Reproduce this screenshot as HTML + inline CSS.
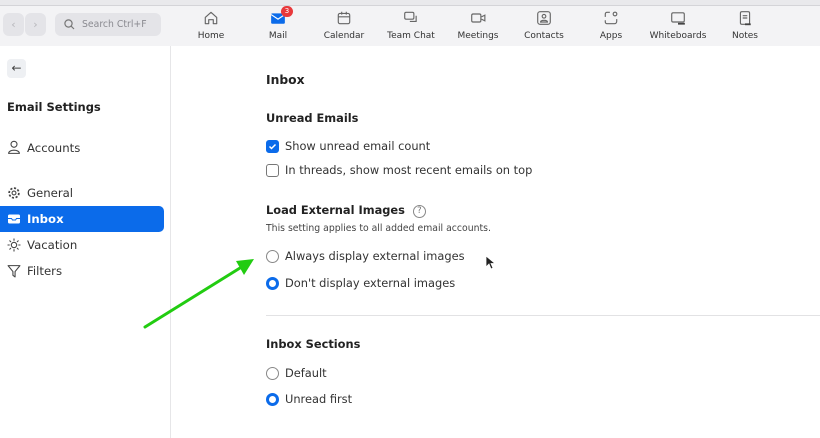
<!DOCTYPE html>
<html><head><style>
*{margin:0;padding:0;box-sizing:border-box}
body{width:820px;height:438px;overflow:hidden;background:#fff;font-family:"DejaVu Sans","Liberation Sans",sans-serif;color:#222;position:relative}
.top{position:absolute;left:0;top:0;width:820px;height:46px;background:#f3f3f5;border-top:5px solid #e9e9ec}
.top:before{content:"";position:absolute;left:0;right:0;top:0;height:1px;background:#d4d4d8}
.nb{position:absolute;top:13px;width:21px;height:23px;background:#e4e4e8;border-radius:6px;color:#b6b6bb;font-size:11px;text-align:center;line-height:23px}
.search{position:absolute;left:55px;top:13px;width:106px;height:23px;background:#e4e4e8;border-radius:6px;font-size:9.3px;color:#8a8a90;line-height:23px;padding-left:27px}
.nav{position:absolute;top:8px;width:70px;text-align:center;font-size:9px;color:#333}
.nav svg{display:block;margin:2px auto 5px;}
.badge{position:absolute;left:38px;top:-2px;width:12px;height:11px;border-radius:6px;background:#e8393c;color:#fff;font-size:7px;line-height:11px;text-align:center}
.side{position:absolute;left:170px;top:46px;width:1px;height:392px;background:#e6e6e8}
.s{position:absolute;left:7px;font-size:11.7px;color:#333;display:flex;align-items:center;gap:6px}
.abs{position:absolute}
.t{position:absolute;left:266px;font-size:11.4px;color:#333;display:flex;align-items:center}
.h{position:absolute;left:266px;font-size:11.4px;font-weight:bold;color:#222}
.cb{width:13px;height:13px;border:1.3px solid #777;border-radius:3px;margin-right:6px;display:inline-block}
.rd{width:13px;height:13px;border:1.2px solid #888;border-radius:50%;margin-right:6px;display:inline-block}
.rd.on{border:3.5px solid #0b6bea}
</style></head><body>
<div class="top">
 <div class="nb" style="left:3px;top:8px">&#8249;</div>
 <div class="nb" style="left:25px;top:8px">&#8250;</div>
 <div class="search" style="top:8px"><svg class="abs" style="left:9px;top:6px" width="11" height="11" viewBox="0 0 11 11"><circle cx="4.5" cy="4.5" r="3.6" fill="none" stroke="#777" stroke-width="1.2"/><path d="M7.2 7.2L10 10" stroke="#777" stroke-width="1.2"/></svg>Search Ctrl+F</div>
</div>
<div class="nav" style="left:176px"><svg width="16" height="16" viewBox="0 0 14 14"><path d="M2 6.5L7 2l5 4.5V12H9V8.5H5V12H2z" fill="none" stroke="#666" stroke-width="1" stroke-linejoin="round"/></svg>Home</div>
<div class="nav" style="left:243px"><svg width="16" height="16" viewBox="0 0 14 14"><rect x="1" y="3" width="12" height="9" rx="1" fill="#0b6bea"/><path d="M1 4l6 4 6-4" fill="none" stroke="#fff" stroke-width="1"/></svg>Mail<div class="badge">3</div></div>
<div class="nav" style="left:309px"><svg width="16" height="16" viewBox="0 0 14 14"><rect x="2" y="3" width="10" height="9" rx="1.5" fill="none" stroke="#666" stroke-width="1"/><path d="M2 6h10M5 1.5v2.5M9 1.5v2.5" stroke="#666" stroke-width="1"/></svg>Calendar</div>
<div class="nav" style="left:376px"><svg width="16" height="16" viewBox="0 0 14 14"><rect x="1.5" y="2" width="8" height="6" rx="1.2" fill="none" stroke="#666" stroke-width="1"/><path d="M6 10h5.5V5" fill="none" stroke="#666" stroke-width="1"/></svg>Team Chat</div>
<div class="nav" style="left:443px"><svg width="16" height="16" viewBox="0 0 14 14"><rect x="1.5" y="3.5" width="8" height="7" rx="1.2" fill="none" stroke="#666" stroke-width="1"/><path d="M10 6l3-1.5v5L10 8" fill="none" stroke="#666" stroke-width="1"/></svg>Meetings</div>
<div class="nav" style="left:509px"><svg width="16" height="16" viewBox="0 0 14 14"><rect x="1.5" y="1.5" width="11" height="11" rx="2" fill="none" stroke="#666" stroke-width="1"/><circle cx="7" cy="5.5" r="1.6" fill="none" stroke="#666"/><path d="M4 10.5c0-2 6-2 6 0z" fill="none" stroke="#666"/></svg>Contacts</div>
<div class="nav" style="left:576px"><svg width="16" height="16" viewBox="0 0 14 14"><path d="M6 2H3.5A1.5 1.5 0 0 0 2 3.5V6M2 9v1.5A1.5 1.5 0 0 0 3.5 12H10a2 2 0 0 0 2-2V8" fill="none" stroke="#666" stroke-width="1"/><circle cx="10.5" cy="3.5" r="1.6" fill="none" stroke="#666"/></svg>Apps</div>
<div class="nav" style="left:643px"><svg width="16" height="16" viewBox="0 0 14 14"><rect x="1.5" y="2.5" width="11" height="8" rx="1.2" fill="none" stroke="#666" stroke-width="1"/><path d="M7 12h6" stroke="#444" stroke-width="1.6"/></svg>Whiteboards</div>
<div class="nav" style="left:710px"><svg width="16" height="16" viewBox="0 0 14 14"><rect x="3" y="1.5" width="8" height="11" rx="1.2" fill="none" stroke="#666" stroke-width="1"/><path d="M5 5h4M5 7h4" stroke="#666"/><path d="M7 12.5h5" stroke="#444" stroke-width="1.6"/></svg>Notes</div>

<div class="side"></div>
<div class="abs" style="left:7px;top:59px;width:19px;height:19px;background:#eef0f3;border-radius:4px;color:#444;font-size:12px;text-align:center;line-height:18px">&#8592;</div>
<div class="abs" style="left:7px;top:100px;font-size:11.5px;font-weight:bold;color:#222">Email Settings</div>
<div class="s" style="top:140px"><svg width="14" height="15" viewBox="0 0 13 14"><circle cx="6.5" cy="4" r="2.8" fill="none" stroke="#444" stroke-width="1"/><path d="M1.5 12.5c0-4 10-4 10 0z" fill="none" stroke="#444" stroke-width="1"/></svg>Accounts</div>
<div class="s" style="top:186px"><svg width="14" height="14" viewBox="0 0 13 13"><circle cx="6.5" cy="6.5" r="4.5" fill="none" stroke="#444" stroke-width="1.6" stroke-dasharray="2 1.5"/><circle cx="6.5" cy="6.5" r="1.8" fill="none" stroke="#444"/></svg>General</div>
<div class="abs" style="left:0;top:206px;width:164px;height:26px;background:#0b6bea;border-radius:0 5px 5px 0"></div>
<div class="s" style="top:212px;color:#fff;font-weight:bold"><svg width="14" height="12" viewBox="0 0 13 12"><rect x="0.5" y="1.5" width="12" height="9" rx="1.5" fill="#fff"/><path d="M0.5 5.5h3.5l1 1.5h3l1-1.5h3.5" fill="none" stroke="#0b6bea" stroke-width="1"/></svg>Inbox</div>
<div class="s" style="top:238px"><svg width="14" height="14" viewBox="0 0 13 13"><circle cx="6.5" cy="6.5" r="2.5" fill="none" stroke="#444"/><path d="M6.5 0.5v2M6.5 10.5v2M0.5 6.5h2M10.5 6.5h2M2.3 2.3l1.4 1.4M9.3 9.3l1.4 1.4M2.3 10.7l1.4-1.4M9.3 3.7l1.4-1.4" stroke="#444"/></svg>Vacation</div>
<div class="s" style="top:264px"><svg width="14" height="14" viewBox="0 0 13 13"><path d="M1 1.5h11L7.5 7v5L5.5 10.5V7z" fill="none" stroke="#444" stroke-width="1" stroke-linejoin="round"/></svg>Filters</div>

<div class="h" style="top:73px;font-size:12.3px">Inbox</div>
<div class="h" style="top:111px">Unread Emails</div>
<div class="t" style="top:139px"><span class="cb" style="background:#0b6bea;border-color:#0b6bea;position:relative"><svg style="position:absolute;left:1px;top:1px" width="9" height="9" viewBox="0 0 9 9"><path d="M1.5 4.5l2 2 4-4" fill="none" stroke="#fff" stroke-width="1.5"/></svg></span>Show unread email count</div>
<div class="t" style="top:163px"><span class="cb"></span>In threads, show most recent emails on top</div>
<div class="h" style="top:203px">Load External Images <span style="display:inline-block;width:13px;height:13px;border:1px solid #888;border-radius:50%;font-size:8.5px;font-weight:normal;color:#777;text-align:center;line-height:11px;margin-left:4px;vertical-align:1px">?</span></div>
<div class="abs" style="left:266px;top:223px;font-size:9.3px;color:#444">This setting applies to all added email accounts.</div>
<div class="t" style="top:249px"><span class="rd"></span>Always display external images</div>
<div class="t" style="top:276px"><span class="rd on"></span>Don't display external images</div>
<div class="abs" style="left:266px;top:315px;width:554px;height:1px;background:#e2e2e4"></div>
<div class="h" style="top:337px">Inbox Sections</div>
<div class="t" style="top:366px"><span class="rd"></span>Default</div>
<div class="t" style="top:392px"><span class="rd on"></span>Unread first</div>
<svg class="abs" style="left:485px;top:255px" width="12" height="16" viewBox="0 0 12 16"><path d="M1 1v11l3-3 2 5 2-1-2-4.5h4z" fill="#222" stroke="#fff" stroke-width="0.8"/></svg>
<svg class="abs" style="left:0;top:0" width="820" height="438"><path d="M145 327L240 268" stroke="#22cc11" stroke-width="3" stroke-linecap="round"/><path d="M254 259L236 261L244 275z" fill="#22cc11"/></svg>
</body></html>
